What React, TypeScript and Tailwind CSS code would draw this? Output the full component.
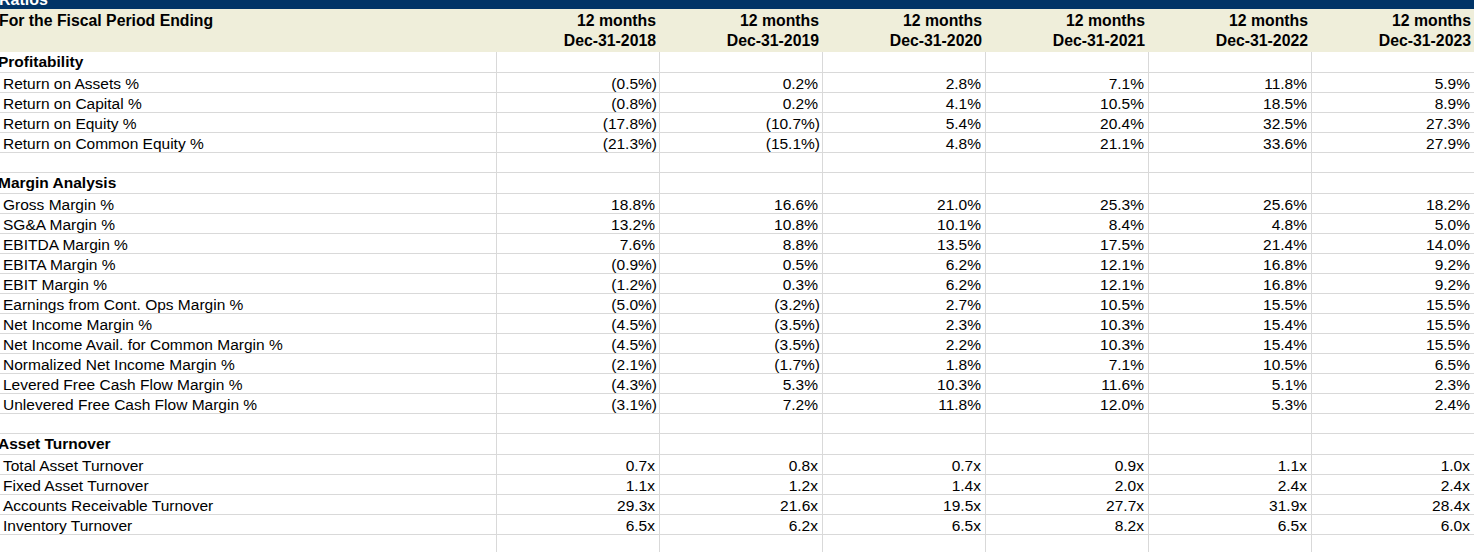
import React from "react";

type Row =
  | { kind: "section"; label: string }
  | { kind: "empty" }
  | { kind: "data"; label: string; values: string[] };

const rows: Row[] = [
  { kind: "section", label: "Profitability" },
  { kind: "data", label: "Return on Assets %", values: ["(0.5%)", "0.2%", "2.8%", "7.1%", "11.8%", "5.9%"] },
  { kind: "data", label: "Return on Capital %", values: ["(0.8%)", "0.2%", "4.1%", "10.5%", "18.5%", "8.9%"] },
  { kind: "data", label: "Return on Equity %", values: ["(17.8%)", "(10.7%)", "5.4%", "20.4%", "32.5%", "27.3%"] },
  { kind: "data", label: "Return on Common Equity %", values: ["(21.3%)", "(15.1%)", "4.8%", "21.1%", "33.6%", "27.9%"] },
  { kind: "empty" },
  { kind: "section", label: "Margin Analysis" },
  { kind: "data", label: "Gross Margin %", values: ["18.8%", "16.6%", "21.0%", "25.3%", "25.6%", "18.2%"] },
  { kind: "data", label: "SG&A Margin %", values: ["13.2%", "10.8%", "10.1%", "8.4%", "4.8%", "5.0%"] },
  { kind: "data", label: "EBITDA Margin %", values: ["7.6%", "8.8%", "13.5%", "17.5%", "21.4%", "14.0%"] },
  { kind: "data", label: "EBITA Margin %", values: ["(0.9%)", "0.5%", "6.2%", "12.1%", "16.8%", "9.2%"] },
  { kind: "data", label: "EBIT Margin %", values: ["(1.2%)", "0.3%", "6.2%", "12.1%", "16.8%", "9.2%"] },
  { kind: "data", label: "Earnings from Cont. Ops Margin %", values: ["(5.0%)", "(3.2%)", "2.7%", "10.5%", "15.5%", "15.5%"] },
  { kind: "data", label: "Net Income Margin %", values: ["(4.5%)", "(3.5%)", "2.3%", "10.3%", "15.4%", "15.5%"] },
  { kind: "data", label: "Net Income Avail. for Common Margin %", values: ["(4.5%)", "(3.5%)", "2.2%", "10.3%", "15.4%", "15.5%"] },
  { kind: "data", label: "Normalized Net Income Margin %", values: ["(2.1%)", "(1.7%)", "1.8%", "7.1%", "10.5%", "6.5%"] },
  { kind: "data", label: "Levered Free Cash Flow Margin %", values: ["(4.3%)", "5.3%", "10.3%", "11.6%", "5.1%", "2.3%"] },
  { kind: "data", label: "Unlevered Free Cash Flow Margin %", values: ["(3.1%)", "7.2%", "11.8%", "12.0%", "5.3%", "2.4%"] },
  { kind: "empty" },
  { kind: "section", label: "Asset Turnover" },
  { kind: "data", label: "Total Asset Turnover", values: ["0.7x", "0.8x", "0.7x", "0.9x", "1.1x", "1.0x"] },
  { kind: "data", label: "Fixed Asset Turnover", values: ["1.1x", "1.2x", "1.4x", "2.0x", "2.4x", "2.4x"] },
  { kind: "data", label: "Accounts Receivable Turnover", values: ["29.3x", "21.6x", "19.5x", "27.7x", "31.9x", "28.4x"] },
  { kind: "data", label: "Inventory Turnover", values: ["6.5x", "6.2x", "6.5x", "8.2x", "6.5x", "6.0x"] },
  { kind: "empty" },
];

const periods = ["Dec-31-2018", "Dec-31-2019", "Dec-31-2020", "Dec-31-2021", "Dec-31-2022", "Dec-31-2023"];

function SheetRow({ row }: { row: Row }) {
  if (row.kind === "section") {
    return (
      <div className="grid grid-cols-[497px_repeat(6,163px)] h-[21px]">
        <div className="flex items-end border-r border-b border-[#d9d9d9] pb-[2px] leading-[16px] font-bold whitespace-nowrap">
          <span className="-ml-[2px]">{row.label}</span>
        </div>
        {[0, 1, 2, 3, 4, 5].map((i) => (
          <div key={i} className="border-r border-b border-[#d9d9d9]" />
        ))}
      </div>
    );
  }
  if (row.kind === "empty") {
    return (
      <div className="grid grid-cols-[497px_repeat(6,163px)] h-[20px]">
        <div className="border-r border-b border-[#d9d9d9]" />
        {[0, 1, 2, 3, 4, 5].map((i) => (
          <div key={i} className="border-r border-b border-[#d9d9d9]" />
        ))}
      </div>
    );
  }
  return (
    <div className="grid grid-cols-[497px_repeat(6,163px)] h-[20px]">
      <div className="flex items-end border-r border-b border-[#d9d9d9] pl-[3px] leading-[16px] whitespace-nowrap">
        {row.label}
      </div>
      {row.values.map((v, i) => (
        <div
          key={i}
          className={
            v.startsWith("(")
              ? "flex items-end justify-end border-r border-b border-[#d9d9d9] pr-[2px] leading-[16px]"
              : "flex items-end justify-end border-r border-b border-[#d9d9d9] pr-[4px] leading-[16px]"
          }
        >
          {v}
        </div>
      ))}
    </div>
  );
}

export default function App() {
  return (
    <div className="w-[1474px] h-[552px] overflow-hidden bg-white text-black font-['Liberation_Sans',Arial,sans-serif] text-[15.5px]">
      <div className="w-[1475px]">
        <div className="h-[9px] overflow-hidden bg-[#003366]">
          <div className="-mt-[8px] -ml-[1px] leading-[16px] text-[16px] font-bold text-white">Ratios</div>
        </div>
        <div className="bg-[#efeeda] font-bold text-[15.8px]">
          <div className="grid grid-cols-[497px_repeat(6,163px)] h-[21px]">
            <div className="flex items-end pb-[1px] leading-[16px] whitespace-nowrap">
              <span className="-ml-[1px]">For the Fiscal Period Ending</span>
            </div>
            {periods.map((p) => (
              <div key={p} className="flex items-end justify-end pr-[4px] pb-[1px] leading-[16px]">
                12 months
              </div>
            ))}
          </div>
          <div className="grid grid-cols-[497px_repeat(6,163px)] h-[22px]">
            <div />
            {periods.map((p) => (
              <div key={p} className="flex items-end justify-end pr-[4px] pb-[3px] leading-[16px]">
                {p}
              </div>
            ))}
          </div>
        </div>
        {rows.map((r, i) => (
          <SheetRow key={i} row={r} />
        ))}
      </div>
    </div>
  );
}
